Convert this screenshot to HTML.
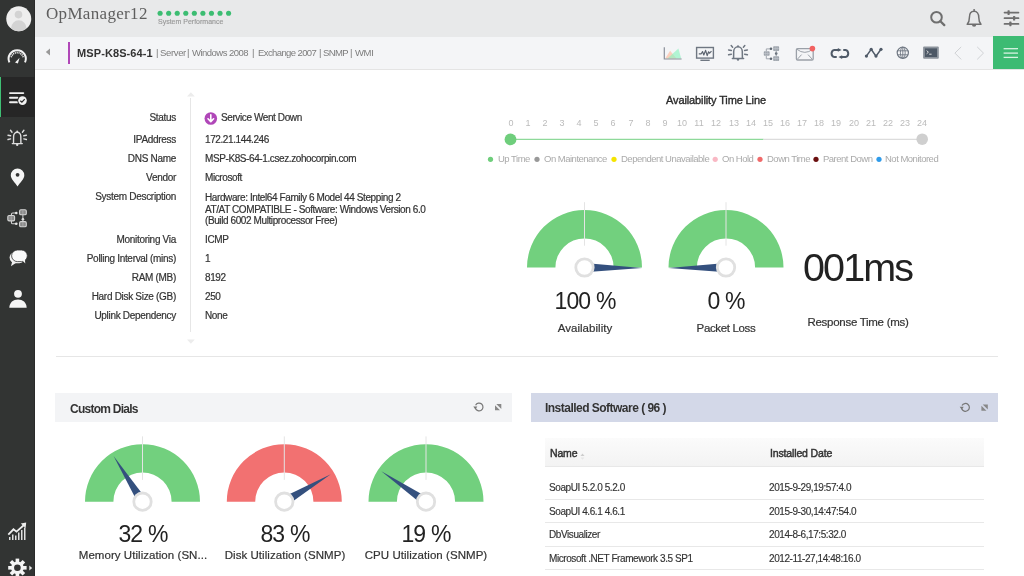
<!DOCTYPE html>
<html><head><meta charset="utf-8">
<style>
*{margin:0;padding:0;box-sizing:border-box}
html,body{width:1024px;height:576px;overflow:hidden;background:#fff;font-family:"Liberation Sans",sans-serif;color:#333}
.a{position:absolute}
.t{position:absolute;white-space:nowrap;line-height:1;will-change:transform}
svg{position:absolute;left:0;top:0}
.lbl{font-size:10px;color:#333;text-align:right;width:160px;left:16px;letter-spacing:-0.3px;-webkit-text-stroke:0.2px #333}
.val{font-size:10px;color:#333;left:205px;letter-spacing:-0.4px;-webkit-text-stroke:0.2px #333}
.num{font-size:9px;color:#bbb;text-align:center;width:20px}
.leg{font-size:9.5px;color:#aaa;letter-spacing:-0.5px}
.pct{font-size:23px;color:#222;text-align:center;width:120px;letter-spacing:-0.8px}
.glb{font-size:11.5px;color:#333;text-align:center;width:160px;letter-spacing:0.05px;-webkit-text-stroke:0.2px #333}
.sb{font-size:9.5px;color:#7c7c7c;top:48px;letter-spacing:-0.35px}
.row{font-size:10px;color:#333;letter-spacing:-0.42px;-webkit-text-stroke:0.15px #333}
</style></head><body>
<!-- sidebar -->
<div class="a" style="left:0;top:0;width:35px;height:576px;background:#323433"></div>
<div class="a" style="left:34px;top:0;width:1px;height:576px;background:#2a2a2a"></div>
<div class="a" style="left:0;top:77px;width:35px;height:40px;background:#262626"></div>
<div class="a" style="left:0;top:77px;width:1.3px;height:40px;background:#3fbf74"></div>

<!-- header -->
<div class="a" style="left:35px;top:0;width:989px;height:37px;background:#e8e9ea"></div>
<div class="t" style="left:46px;top:5.3px;font-family:'Liberation Serif',serif;font-size:17px;color:#5e5e5e;letter-spacing:0.32px">OpManager12</div>
<div class="t" style="left:158px;top:18px;font-size:7px;color:#999;-webkit-text-stroke:0.15px #999">System Performance</div>

<!-- subbar -->
<div class="a" style="left:35px;top:37px;width:989px;height:33px;background:#f4f5f7;border-bottom:1px solid #e4e4e4"></div>
<div class="a" style="left:67.8px;top:42px;width:2px;height:21.5px;background:#b047b8"></div>
<div class="t" style="left:77px;top:47.5px;font-size:11px;font-weight:bold;color:#333;letter-spacing:0.1px">MSP-K8S-64-1</div>
<div class="t sb" style="left:156px">|</div><div class="t sb" style="left:159.8px">Server</div><div class="t sb" style="left:187.4px">|</div><div class="t sb" style="left:191.5px;letter-spacing:-0.52px">Windows 2008</div><div class="t sb" style="left:252.4px">|</div><div class="t sb" style="left:257.8px;letter-spacing:-0.6px">Exchange 2007</div><div class="t sb" style="left:318.6px">|</div><div class="t sb" style="left:322.5px;letter-spacing:-0.6px">SNMP</div><div class="t sb" style="left:350.4px">|</div><div class="t sb" style="left:354.6px">WMI</div>
<div class="a" style="left:993px;top:36px;width:31px;height:33px;background:#3dbb73"></div>

<!-- details -->
<div class="a" style="left:190px;top:98px;width:1px;height:234px;background:#e6e6e6"></div>
<div class="t lbl" style="top:113.2px">Status</div>
<div class="t lbl" style="top:134.7px">IPAddress</div>
<div class="t lbl" style="top:154.4px">DNS Name</div>
<div class="t lbl" style="top:173.2px">Vendor</div>
<div class="t lbl" style="top:192.3px">System Description</div>
<div class="t lbl" style="top:235.4px">Monitoring Via</div>
<div class="t lbl" style="top:253.6px">Polling Interval (mins)</div>
<div class="t lbl" style="top:273.3px">RAM (MB)</div>
<div class="t lbl" style="top:291.5px">Hard Disk Size (GB)</div>
<div class="t lbl" style="top:310.6px">Uplink Dependency</div>

<div class="t val" style="left:220.5px;top:113.2px">Service Went Down</div>
<div class="t val" style="top:134.7px">172.21.144.246</div>
<div class="t val" style="top:154.4px">MSP-K8S-64-1.csez.zohocorpin.com</div>
<div class="t val" style="top:173.2px">Microsoft</div>
<div class="t val" style="top:192.3px;line-height:11.7px">Hardware: Intel64 Family 6 Model 44 Stepping 2<br>AT/AT COMPATIBLE - Software: Windows Version 6.0<br>(Build 6002 Multiprocessor Free)</div>
<div class="t val" style="top:235.4px">ICMP</div>
<div class="t val" style="top:253.6px">1</div>
<div class="t val" style="top:273.3px">8192</div>
<div class="t val" style="top:291.5px">250</div>
<div class="t val" style="top:310.6px">None</div>

<div class="a" style="left:56px;top:356px;width:942px;height:1px;background:#e6e6e6"></div>

<!-- timeline -->
<div class="t" style="left:616.4px;top:95px;width:200px;text-align:center;font-size:11px;color:#2a2a2a;letter-spacing:-0.12px;-webkit-text-stroke:0.35px #2a2a2a">Availability Time Line</div>
<div class="t num" style="left:500.50px;top:118.5px">0</div><div class="t num" style="left:517.65px;top:118.5px">1</div><div class="t num" style="left:534.81px;top:118.5px">2</div><div class="t num" style="left:551.96px;top:118.5px">3</div><div class="t num" style="left:569.12px;top:118.5px">4</div><div class="t num" style="left:586.27px;top:118.5px">5</div><div class="t num" style="left:603.42px;top:118.5px">6</div><div class="t num" style="left:620.58px;top:118.5px">7</div><div class="t num" style="left:637.73px;top:118.5px">8</div><div class="t num" style="left:654.89px;top:118.5px">9</div><div class="t num" style="left:672.04px;top:118.5px">10</div><div class="t num" style="left:689.19px;top:118.5px">11</div><div class="t num" style="left:706.35px;top:118.5px">12</div><div class="t num" style="left:723.50px;top:118.5px">13</div><div class="t num" style="left:740.66px;top:118.5px">14</div><div class="t num" style="left:757.81px;top:118.5px">15</div><div class="t num" style="left:774.96px;top:118.5px">16</div><div class="t num" style="left:792.12px;top:118.5px">17</div><div class="t num" style="left:809.27px;top:118.5px">18</div><div class="t num" style="left:826.43px;top:118.5px">19</div><div class="t num" style="left:843.58px;top:118.5px">20</div><div class="t num" style="left:860.73px;top:118.5px">21</div><div class="t num" style="left:877.89px;top:118.5px">22</div><div class="t num" style="left:895.04px;top:118.5px">23</div><div class="t num" style="left:912.20px;top:118.5px">24</div>
<div class="t leg" style="left:497.6px;top:154px">Up Time</div>
<div class="t leg" style="left:543.7px;top:154px">On Maintenance</div>
<div class="t leg" style="left:621px;top:154px">Dependent Unavailable</div>
<div class="t leg" style="left:722px;top:154px">On Hold</div>
<div class="t leg" style="left:766.5px;top:154px">Down Time</div>
<div class="t leg" style="left:822.6px;top:154px">Parent Down</div>
<div class="t leg" style="left:884.9px;top:154px">Not Monitored</div>

<!-- top gauges text -->
<div class="t pct" style="left:524.5px;top:289.6px">100 %</div>
<div class="t glb" style="left:504.5px;top:323px">Availability</div>
<div class="t pct" style="left:666px;top:289.6px">0 %</div>
<div class="t glb" style="left:646px;top:323px;letter-spacing:-0.35px">Packet Loss</div>
<div class="t" style="left:803px;top:248.2px;font-size:39.5px;color:#222;letter-spacing:-1.9px">001ms</div>
<div class="t glb" style="left:778.3px;top:317px;letter-spacing:-0.28px">Response Time (ms)</div>

<!-- panels -->
<div class="a" style="left:55px;top:393px;width:457px;height:29px;background:#f3f4f6"></div>
<div class="t" style="left:70px;top:402.5px;font-size:12px;font-weight:bold;color:#333;letter-spacing:-0.75px">Custom Dials</div>
<div class="a" style="left:531px;top:393px;width:467px;height:29px;background:#d3d8e8"></div>
<div class="t" style="left:545.4px;top:402px;font-size:12px;font-weight:bold;color:#333;letter-spacing:-0.52px">Installed Software ( 96 )</div>

<!-- custom dials text -->
<div class="t pct" style="left:82.5px;top:522.8px">32 %</div>
<div class="t glb" style="left:62.5px;top:550px">Memory Utilization (SN...</div>
<div class="t pct" style="left:224.5px;top:522.8px">83 %</div>
<div class="t glb" style="left:204.5px;top:550px">Disk Utilization (SNMP)</div>
<div class="t pct" style="left:366px;top:522.8px">19 %</div>
<div class="t glb" style="left:346px;top:550px">CPU Utilization (SNMP)</div>

<!-- table -->
<div class="a" style="left:545px;top:438px;width:439px;height:28.5px;background:linear-gradient(#fbfbfb,#f3f3f3);border-bottom:1px solid #e8e8e8"></div>
<div class="t" style="left:550px;top:448px;font-size:10.5px;font-weight:normal;color:#333;letter-spacing:-0.15px;-webkit-text-stroke:0.45px #333">Name</div>
<div class="t" style="left:770px;top:448px;font-size:10.5px;font-weight:normal;color:#333;letter-spacing:-0.15px;-webkit-text-stroke:0.45px #333">Installed Date</div>
<div class="t row" style="left:549px;top:482.7px">SoapUI 5.2.0 5.2.0</div>
<div class="t row" style="left:769px;top:482.7px">2015-9-29,19:57:4.0</div>
<div class="a" style="left:545px;top:498.5px;width:439px;height:1px;background:#e8e8e8"></div>
<div class="t row" style="left:549px;top:506.7px">SoapUI 4.6.1 4.6.1</div>
<div class="t row" style="left:769px;top:506.7px">2015-9-30,14:47:54.0</div>
<div class="a" style="left:545px;top:522px;width:439px;height:1px;background:#e8e8e8"></div>
<div class="t row" style="left:549px;top:530.2px">DbVisualizer</div>
<div class="t row" style="left:769px;top:530.2px">2014-8-6,17:5:32.0</div>
<div class="a" style="left:545px;top:545.5px;width:439px;height:1px;background:#e8e8e8"></div>
<div class="t row" style="left:549px;top:553.7px">Microsoft .NET Framework 3.5 SP1</div>
<div class="t row" style="left:769px;top:553.7px">2012-11-27,14:48:16.0</div>
<div class="a" style="left:545px;top:568.5px;width:439px;height:1px;background:#e8e8e8"></div>

<svg width="1024" height="576" viewBox="0 0 1024 576">
<defs>
 <g id="gauge">
  <path d="M-57.5,0 A57.5,57.5 0 0 1 57.5,0 L29.1,0 A29.1,29.1 0 0 0 -29.1,0 Z"/>
  <line x1="0" y1="-65.3" x2="0" y2="-21.8" stroke="#e4e4e4" stroke-width="1"/>
 </g>
 <g id="hub"><circle r="8.7" fill="#fff" stroke="#e0e0e0" stroke-width="2.8"/></g>
</defs>
<!-- timeline -->
<line x1="510.5" y1="139.4" x2="763.5" y2="139.4" stroke="#8ed99a" stroke-width="1.2"/>
<line x1="763.5" y1="139.4" x2="922" y2="139.4" stroke="#dcdcdc" stroke-width="1.2"/>
<circle cx="510.5" cy="139.4" r="5.9" fill="#6fce7c"/>
<circle cx="922.2" cy="139.2" r="5.8" fill="#cfcfcf"/>
<circle cx="490.5" cy="159.3" r="2.6" fill="#6fce7c"/>
<circle cx="537" cy="159.3" r="2.6" fill="#999"/>
<circle cx="614" cy="159.3" r="2.6" fill="#f5e400"/>
<circle cx="715.2" cy="159.3" r="2.6" fill="#f9b8c4"/>
<circle cx="760" cy="159.3" r="2.6" fill="#f06a6a"/>
<circle cx="816" cy="159.3" r="2.6" fill="#6a0f0f"/>
<circle cx="879" cy="159.3" r="2.6" fill="#2f9bea"/>

<!-- top gauges -->
<g transform="translate(584.5,267.5)" fill="#72d07e"><use href="#gauge"/>
 <path d="M0,-4.6 L57.5,0.4 L0,4.8 Z" fill="#34507e"/><use href="#hub"/></g>
<g transform="translate(726,267.5)" fill="#72d07e"><use href="#gauge"/>
 <path d="M0,-4.6 L-57.5,0.4 L0,4.8 Z" fill="#34507e"/><use href="#hub"/></g>

<!-- custom dials -->
<g transform="translate(142.5,501.7)" fill="#72d07e"><use href="#gauge"/>
 <g transform="rotate(57.6)"><path d="M0,-4.6 L-54,0 L0,4.6 Z" fill="#34507e"/></g><use href="#hub"/></g>
<g transform="translate(284.3,501.7)" fill="#f27171"><use href="#gauge"/>
 <g transform="rotate(149.4)"><path d="M0,-4.6 L-54,0 L0,4.6 Z" fill="#34507e"/></g><use href="#hub"/></g>
<g transform="translate(426,501.7)" fill="#72d07e"><use href="#gauge"/>
 <g transform="rotate(34.2)"><path d="M0,-4.6 L-54,0 L0,4.6 Z" fill="#34507e"/></g><use href="#hub"/></g>

<!-- status icon -->
<circle cx="210.8" cy="118.5" r="6.3" fill="#b047b8"/>
<path d="M210.8,114.8 V121.5 M208,118.8 L210.8,121.6 L213.6,118.8" stroke="#fff" stroke-width="1.6" fill="none" stroke-linecap="round" stroke-linejoin="round"/>
<!-- divider arrows -->
<path d="M187,96.6 L190.9,92.3 L194.8,96.6 Z" fill="#ececec"/>
<path d="M187,339.5 L190.9,343.8 L194.8,339.5 Z" fill="#ececec"/>

<!-- header dots -->
<g fill="#3cbd72"><circle cx="160.10" cy="13.2" r="2.55"/><circle cx="168.66" cy="13.2" r="2.55"/><circle cx="177.22" cy="13.2" r="2.55"/><circle cx="185.78" cy="13.2" r="2.55"/><circle cx="194.34" cy="13.2" r="2.55"/><circle cx="202.90" cy="13.2" r="2.55"/><circle cx="211.46" cy="13.2" r="2.55"/><circle cx="220.02" cy="13.2" r="2.55"/><circle cx="228.58" cy="13.2" r="2.55"/></g>

<!-- ===== sidebar icons ===== -->
<defs><clipPath id="avc"><circle cx="18.75" cy="18.75" r="12.5"/></clipPath></defs>
<circle cx="18.75" cy="18.75" r="12.5" fill="#eeeeee"/>
<g clip-path="url(#avc)" fill="#d3d3d3"><circle cx="18.5" cy="14.6" r="3.8"/><ellipse cx="18.75" cy="28.5" rx="7.8" ry="8.2"/></g>
<!-- dashboard -->
<path d="M9.4,62.4 A8.6,8.6 0 1 1 25,62.4" fill="none" stroke="#f2f2f2" stroke-width="2"/>
<path d="M12.13,56.95 L10.62,56.41 M12.92,55.51 L11.65,54.54 M14.10,54.38 L13.18,53.07 M15.58,53.65 L15.10,52.12 M17.20,53.40 L17.20,51.80 M18.82,53.65 L19.30,52.12 M20.30,54.38 L21.22,53.07 M21.48,55.51 L22.75,54.54 M22.27,56.95 L23.78,56.41" fill="none" stroke="#f2f2f2" stroke-width="1.1"/>
<path d="M15,62.4 L19.6,57.8 L17.9,63.4 Z" fill="#f2f2f2"/>
<!-- list check -->
<g stroke="#f0f0f0" stroke-width="1.9" stroke-linecap="round"><line x1="10" y1="93.1" x2="23.3" y2="93.1"/><line x1="10" y1="97.8" x2="17.5" y2="97.8"/><line x1="10" y1="102.2" x2="17.5" y2="102.2"/></g>
<circle cx="22.5" cy="100.6" r="5.2" fill="#262626"/><circle cx="22.5" cy="100.6" r="4.3" fill="#f0f0f0"/>
<path d="M20.3,100.7 L21.9,102.2 L24.7,99.1" fill="none" stroke="#262626" stroke-width="1.2"/>
<!-- alarm -->
<g fill="none" stroke="#dddddd" stroke-width="1.4" stroke-linecap="round">
<path d="M12.3,143.6 L22.3,143.6 M13.5,143.3 L13.6,136.5 A3.6,4.2 0 0 1 20.8,136.5 L20.9,143.3"/>
<path d="M8,135.2 L10.6,135.8 M8,139.5 L10.6,138.9 M10.5,130.3 L12,132.2 M26.4,135.2 L23.8,135.8 M26.4,139.5 L23.8,138.9 M23.9,130.3 L22.4,132.2"/>
</g>
<circle cx="17.2" cy="131.5" r="0.9" fill="#ddd"/><circle cx="17.2" cy="144.8" r="1.2" fill="#ddd"/>
<!-- pin -->
<path d="M17.55,186.4 C15,182.5 10.8,179 10.8,175.2 A6.75,6.75 0 0 1 24.3,175.2 C24.3,179 20.1,182.5 17.55,186.4 Z" fill="#f5f5f5"/>
<circle cx="17.55" cy="174.8" r="1.9" fill="#333"/>
<!-- flow -->
<g fill="#8a8a8a" stroke="#d4d4d4" stroke-width="1.1"><rect x="7.8" y="215.5" width="6.8" height="5.4" rx="1.3"/><rect x="19.6" y="209.8" width="6.7" height="5" rx="1.3"/><rect x="19.6" y="221.6" width="6.7" height="5.2" rx="1.3"/></g>
<g stroke="#c0c0c0" stroke-width="0.6"><path d="M11.2,216.2 V220.3 M22.9,210.5 V214.2 M22.9,222.2 V226.2"/></g>
<path d="M11.4,215.5 V214.4 Q11.4,213 12.8,213 H16 M11.4,220.9 V222.4 Q11.4,223.8 12.8,223.8 H16" fill="none" stroke="#d4d4d4" stroke-width="1.1"/>
<g fill="#e6e6e6"><circle cx="16.3" cy="213" r="1.3"/><circle cx="16.3" cy="223.8" r="1.3"/><circle cx="22.9" cy="219.3" r="1.3"/></g>
<line x1="22.9" y1="214.8" x2="22.9" y2="221.6" stroke="#d4d4d4" stroke-width="1"/>
<!-- chat -->
<rect x="9.6" y="252" width="15.3" height="11.2" rx="5.6" fill="#f2f2f2"/>
<path d="M12.4,260.5 L11,266.2 L16.5,262.6 Z" fill="#f2f2f2"/>
<rect x="11.6" y="250" width="15.7" height="11.6" rx="5.8" fill="#fafafa" stroke="#333" stroke-width="0.8"/>
<path d="M22.5,260.5 L25.3,263.6 L24.8,259.2 Z" fill="#fafafa"/>
<!-- user -->
<circle cx="18" cy="293.8" r="3.9" fill="#f5f5f5"/>
<path d="M9.3,307.8 C9.6,302.2 13.2,299.5 18,299.5 C22.8,299.5 26.4,302.2 26.7,307.8 Z" fill="#f5f5f5"/>
<!-- trend chart -->
<g fill="#e0e0e0"><rect x="9" y="537" width="1.5" height="3"/><rect x="12" y="534.5" width="1.5" height="5.5"/><rect x="15" y="535.5" width="1.5" height="4.5"/><rect x="18" y="532.5" width="1.5" height="7.5"/><rect x="21" y="530" width="1.5" height="10"/><rect x="24" y="527.5" width="1.5" height="12.5"/></g>
<path d="M8.3,534.6 L13.5,529.3 L16.5,531.6 L24,525" fill="none" stroke="#eeeeee" stroke-width="1.8"/>
<path d="M20.8,523.4 L26.2,522.6 L25.6,528 Z" fill="#eee"/>
<!-- gear -->
<g transform="translate(17.4,567.8)" fill="#f5f5f5">
<circle r="6.3"/>
<g id="teeth"><rect x="-1.8" y="-9.2" width="3.6" height="4"/><rect x="-1.8" y="5.2" width="3.6" height="4"/><rect x="-9.2" y="-1.8" width="4" height="3.6"/><rect x="5.2" y="-1.8" width="4" height="3.6"/></g>
<use href="#teeth" transform="rotate(45)"/>
<circle r="3.3" fill="#333"/>
</g>
<path d="M29.3,565.6 L32.2,568 L29.3,570.4 Z" fill="#e8e8e8"/>

<!-- ===== header icons ===== -->
<g fill="none" stroke="#6f6f6f" stroke-width="2" stroke-linecap="round">
<circle cx="936.5" cy="17.3" r="5.3"/><line x1="940.4" y1="21.2" x2="944.3" y2="25.1" stroke-width="2.3"/>
</g>
<g fill="none" stroke="#6f6f6f" stroke-width="1.5" stroke-linejoin="round">
<path d="M967.2,24.2 L981,24.2 C979.2,22.4 978.8,20.6 978.8,17.4 C978.8,13.4 976.8,11.3 974.1,11.3 C971.4,11.3 969.4,13.4 969.4,17.4 C969.4,20.6 969,22.4 967.2,24.2 Z"/>
</g>
<circle cx="974.1" cy="10" r="1" fill="#6f6f6f"/><path d="M971.9,24.5 A2.2,2.2 0 0 0 976.3,24.5 Z" fill="#6f6f6f"/>
<g stroke="#6f6f6f" stroke-width="1.7" stroke-linecap="round"><line x1="1004.5" y1="12.6" x2="1018.5" y2="12.6"/><line x1="1004.5" y1="18.2" x2="1018.5" y2="18.2"/><line x1="1004.5" y1="23.9" x2="1018.5" y2="23.9"/></g>
<g fill="#6f6f6f"><rect x="1007.5" y="10.3" width="2.2" height="4.6" rx="0.6"/><rect x="1013" y="15.9" width="2.2" height="4.6" rx="0.6"/><rect x="1009.3" y="21.6" width="2.2" height="4.6" rx="0.6"/></g>

<!-- ===== subbar icons ===== -->
<path d="M45.8,52 L50,48.6 L50,55.4 Z" fill="#999"/>
<!-- area chart -->
<path d="M665.3,58.6 L670.1,50.7 L676.5,58.6 Z" fill="#ffb596" opacity="0.6"/>
<path d="M667.5,58.6 L678.4,48.6 L681.2,58.6 Z" fill="#8ef2c0" opacity="0.65"/>
<path d="M664.3,47.3 V59 H681.6" fill="none" stroke="#8a9099" stroke-width="1.2"/>
<!-- monitor -->
<rect x="696.6" y="47.5" width="16.8" height="10.6" fill="none" stroke="#6f7782" stroke-width="1.4"/>
<line x1="700.4" y1="60.3" x2="709.7" y2="60.3" stroke="#6f7782" stroke-width="1.4"/>
<path d="M698.8,53.8 L701.2,53.8 L702.6,51.6 L703.8,55 L705.6,50.4 L707.2,55.6 L708.6,51.8 L709.6,53.2 L711.5,51.2" fill="none" stroke="#5c6470" stroke-width="1.2" stroke-linejoin="round"/>
<!-- bell rays -->
<g fill="none" stroke="#6f7782" stroke-width="1.5" stroke-linecap="round">
<path d="M732.4,58.4 L743.6,58.4 M733.6,58 L733.7,51.6 A4.3,4.8 0 0 1 742.3,51.6 L742.4,58"/>
<path d="M728.6,49.9 L731.4,50.4 M728.6,54.8 L731.4,54.2 M731.2,45.6 L732.6,47.2 M747.4,49.9 L744.6,50.4 M747.4,54.8 L744.6,54.2 M744.8,45.6 L743.4,47.2"/>
</g>
<circle cx="738" cy="46.2" r="1" fill="#6f7782"/><circle cx="738" cy="59.6" r="1.2" fill="#6f7782"/>
<!-- flow -->
<g fill="#9ca3ab"><rect x="763.8" y="51.2" width="5.8" height="4.6" rx="0.8"/><rect x="773.2" y="46.2" width="5.9" height="4.8" rx="0.8"/><rect x="773.2" y="56.2" width="5.9" height="4.8" rx="0.8"/></g>
<g stroke="#c9cdd2" stroke-width="0.5"><path d="M763.8,53.5 H769.6 M765.7,51.2 V55.8 M767.7,51.2 V55.8 M773.2,48.6 H779.1 M775.2,46.2 V51 M777.1,46.2 V51 M773.2,58.6 H779.1 M775.2,56.2 V61 M777.1,56.2 V61"/></g>
<path d="M766.3,51.2 V48.9 H770.8 M766.3,55.8 V58.8 H770.8" fill="none" stroke="#a0a6ae" stroke-width="1"/>
<g fill="#5f6873"><circle cx="771" cy="48.8" r="1.3"/><circle cx="771" cy="58.7" r="1.3"/><circle cx="776.2" cy="53.6" r="1.3"/></g>
<line x1="776.2" y1="51" x2="776.2" y2="56.2" stroke="#7d858f" stroke-width="0.8"/>
<!-- mail -->
<rect x="796.4" y="48.6" width="16.8" height="11.4" rx="1.2" fill="none" stroke="#9aa0a8" stroke-width="1.3"/>
<path d="M796.8,49.2 Q804.8,55.5 812.8,49.2 M797.2,59.4 L801.6,54.6 M812.4,59.4 L808,54.6" fill="none" stroke="#9aa0a8" stroke-width="1"/>
<circle cx="812.4" cy="48.6" r="2.8" fill="#f26262"/>
<!-- loop -->
<g fill="none" stroke="#4f5a68" stroke-width="2" stroke-linecap="round">
<path d="M838.5,49.9 H834.4 A3.7,3.7 0 0 0 834.4,57.1 H836"/>
<path d="M841.5,57.1 H845.4 A3.7,3.7 0 0 0 845.4,49.9 H844"/>
</g>
<g fill="#4f5a68"><path d="M837.8,48 L841.6,49.9 L837.8,51.8 Z"/><path d="M842.2,55.2 L838.4,57.1 L842.2,59 Z"/></g>
<!-- network -->
<path d="M866.4,56.1 L871.2,49.3 L876,56.1 L881,49.3" fill="none" stroke="#4f5a68" stroke-width="1.5"/>
<g fill="#4f5a68"><circle cx="866.4" cy="56.1" r="1.6"/><circle cx="871.2" cy="49.3" r="1.6"/><circle cx="876" cy="56.1" r="1.6"/><circle cx="881" cy="49.3" r="1.6"/></g>
<!-- globe -->
<g fill="none" stroke="#6f7782" stroke-width="1.2">
<circle cx="902.8" cy="52.8" r="5.6"/><ellipse cx="902.8" cy="52.8" rx="2.4" ry="5.6" stroke-width="0.9"/>
<path d="M897.4,50.8 H908.2 M897.4,54.8 H908.2 M902.8,47.2 V58.4" stroke-width="0.9"/>
</g>
<!-- terminal -->
<rect x="923.1" y="46.6" width="15.7" height="12.2" rx="1" fill="#8c939c"/>
<rect x="924.9" y="48.4" width="12.1" height="8.6" fill="#4d5866"/>
<path d="M926.6,50.6 L928.4,52.2 L926.6,53.8" fill="none" stroke="#e6e6e6" stroke-width="0.9"/>
<line x1="929.2" y1="54.2" x2="931.6" y2="54.2" stroke="#e6e6e6" stroke-width="0.9"/>
<!-- chevrons -->
<path d="M961.2,46.9 L954.9,53.1 L961.2,59.4 M977.2,46.9 L983.5,53.1 L977.2,59.4" fill="none" stroke="#cfd1d4" stroke-width="1"/>
<!-- hamburger -->
<g stroke="#d8f3e2" stroke-width="1.3"><line x1="1003.6" y1="48.7" x2="1018" y2="48.7"/><line x1="1003.6" y1="53.1" x2="1018" y2="53.1"/><line x1="1003.6" y1="57.4" x2="1018" y2="57.4"/></g>

<!-- panel icons -->
<path d="M475.4,408.3 A3.9,3.9 0 1 0 475.6,405.2" fill="none" stroke="#777" stroke-width="1.2"/>
<path d="M473.3,406.4 L477.3,406.4 L475.4,409.4 Z" fill="#777"/>
<path d="M496.3,404 L501.3,404 L501.3,409 Z M495,405.3 L495,410.3 L500,410.3 Z" fill="#888"/>
<path d="M961.8,408.7 A3.9,3.9 0 1 0 962,405.6" fill="none" stroke="#777" stroke-width="1.2"/>
<path d="M959.7,406.8 L963.7,406.8 L961.8,409.8 Z" fill="#777"/>
<path d="M982.7,404.4 L987.8,404.4 L987.8,409.5 Z M981.4,405.7 L981.4,410.8 L986.5,410.8 Z" fill="#888"/>
<!-- sort arrow -->
<path d="M580.5,456 L582.5,453.6 L584.5,456 Z" fill="#ccc"/><path d="M580.5,457.4 L582.5,459.8 L584.5,457.4 Z" fill="#e6e6e6"/>
</svg>

</body></html>
